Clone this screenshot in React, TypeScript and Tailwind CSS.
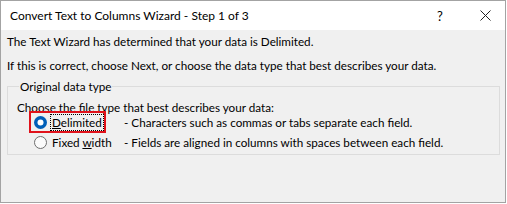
import React from "react";

function Radio({ checked }: { checked: boolean }) {
  return checked ? (
    <svg width="13" height="13" viewBox="0 0 13 13" className="shrink-0">
      <circle cx="6.5" cy="6.5" r="6.5" fill="#005fb8" />
      <circle cx="6.5" cy="6.5" r="3" fill="#ffffff" />
    </svg>
  ) : (
    <svg width="13" height="13" viewBox="0 0 13 13" className="shrink-0">
      <circle cx="6.5" cy="6.5" r="6" fill="#fbfbfb" stroke="#6e6e6e" strokeWidth="1" />
    </svg>
  );
}

export default function App() {
  return (
    <div
      className="w-[507px] h-[204px] bg-white text-[11.7px] leading-[16px] text-black"
      style={{ fontFamily: 'Lato, "Noto Sans", sans-serif' }}
    >
      <div className="w-[506px] h-[203px] border border-[#a3a3a3] bg-[#f0f0f0] flex flex-col">
        <div className="h-[29px] bg-white flex items-center pl-[9px] pr-[14px] text-[12px]">
          <span className="flex-1">Convert Text to Columns Wizard - Step 1 of 3</span>
          <span className="w-[10px] text-center mr-[35px] text-[13px]">?</span>
          <svg width="11" height="11" viewBox="0 0 11 11">
            <path d="M0.5 0.5 L10.5 10.5 M10.5 0.5 L0.5 10.5" stroke="#222" strokeWidth="1" />
          </svg>
        </div>
        <div className="flex flex-col pl-[6px] pr-[5px] pt-[3px]">
          <div>The Text Wizard has determined that your data is Delimited.</div>
          <div className="mt-[8px]">If this is correct, choose Next, or choose the data type that best describes your data.</div>
          <fieldset className="mt-[5px] border border-[#dcdcdc] pl-[9px] pr-2 pb-[3px] pt-[5px]">
            <legend className="px-[1px] ml-[2px]">Original data type</legend>
            <div>Choose the file type that best describes your data:</div>
            <div className="flex items-center mt-[-4px]">
              <div className="w-[107px] shrink-0 flex">
                <div className="flex items-center gap-[3px] border-2 border-[#e0121b] pl-[3px] w-[77px] h-[22px] ml-[12px]">
                  <Radio checked />
                  <span className="border border-dotted border-black px-[1px] leading-[15px]">
                    <span className="underline">D</span>elimited
                  </span>
                </div>
              </div>
              <span>- Characters such as commas or tabs separate each field.</span>
            </div>
            <div className="flex items-center h-[18px]">
              <div className="w-[107px] shrink-0 flex items-center gap-[5px] pl-[17px]">
                <Radio checked={false} />
                <span>
                  Fixed <span className="underline">w</span>idth
                </span>
              </div>
              <span>- Fields are aligned in columns with spaces between each field.</span>
            </div>
          </fieldset>
        </div>
      </div>
    </div>
  );
}
